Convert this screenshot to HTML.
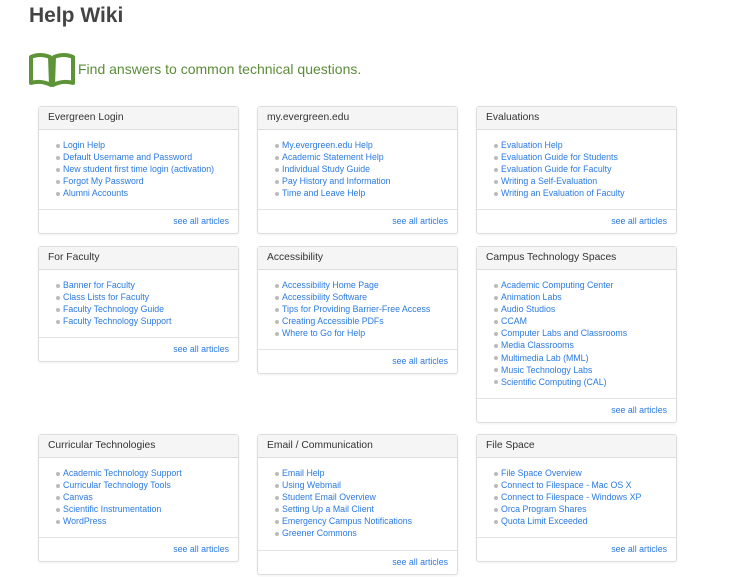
<!DOCTYPE html>
<html><head><meta charset="utf-8"><style>
*{margin:0;padding:0;box-sizing:border-box}
body{width:750px;height:577px;background:#fff;font-family:"Liberation Sans",sans-serif;position:relative;overflow:hidden}
h1{position:absolute;left:29px;top:4px;font-size:21px;font-weight:bold;color:#444}
.tag{position:absolute;left:78px;top:61px;font-size:14px;color:#5b8c38}
.p{position:absolute;width:201px;border:1px solid #ddd;border-radius:3px;box-shadow:0 1px 2px rgba(0,0,0,.06);background:#fff}
.h{height:23px;background:#f5f5f5;border-bottom:1px solid #ddd;font-size:10.3px;color:#333;padding:5px 9px 0;line-height:12px}
ul{list-style:none;padding:9px 0 10px 24px}
li{font-size:8.8px;line-height:12.1px;color:#2a7ae2;position:relative;white-space:nowrap}
li:before{content:"";position:absolute;left:-7px;top:4.5px;width:4px;height:4px;border-radius:50%;background:#bbb}
.f{height:24px;border-top:1px solid #e3e3e3;text-align:right;font-size:8.8px;color:#2a7ae2;padding:6px 9px 0 0}
</style></head><body>
<h1>Help Wiki</h1>
<svg style="position:absolute;left:28px;top:52px" width="48" height="36" viewBox="0 0 48 36"><path d="M3 5 Q12 1 22 5 L23 33 Q13 28 3 31 Z M45 5 Q36 1 26 5 L25 33 Q35 28 45 31 Z" fill="none" stroke="#5e9438" stroke-width="4" stroke-linejoin="round"/></svg>
<div class="tag">Find answers to common technical questions.</div>

<div class="p" style="left:38px;top:106px"><div class="h">Evergreen Login</div><ul><li>Login Help</li><li>Default Username and Password</li><li>New student first time login (activation)</li><li>Forgot My Password</li><li>Alumni Accounts</li></ul><div class="f">see all articles</div></div>
<div class="p" style="left:257px;top:106px"><div class="h">my.evergreen.edu</div><ul><li>My.evergreen.edu Help</li><li>Academic Statement Help</li><li>Individual Study Guide</li><li>Pay History and Information</li><li>Time and Leave Help</li></ul><div class="f">see all articles</div></div>
<div class="p" style="left:476px;top:106px"><div class="h">Evaluations</div><ul><li>Evaluation Help</li><li>Evaluation Guide for Students</li><li>Evaluation Guide for Faculty</li><li>Writing a Self-Evaluation</li><li>Writing an Evaluation of Faculty</li></ul><div class="f">see all articles</div></div>

<div class="p" style="left:38px;top:246px"><div class="h">For Faculty</div><ul><li>Banner for Faculty</li><li>Class Lists for Faculty</li><li>Faculty Technology Guide</li><li>Faculty Technology Support</li></ul><div class="f">see all articles</div></div>
<div class="p" style="left:257px;top:246px"><div class="h">Accessibility</div><ul><li>Accessibility Home Page</li><li>Accessibility Software</li><li>Tips for Providing Barrier-Free Access</li><li>Creating Accessible PDFs</li><li>Where to Go for Help</li></ul><div class="f">see all articles</div></div>
<div class="p" style="left:476px;top:246px"><div class="h">Campus Technology Spaces</div><ul><li>Academic Computing Center</li><li>Animation Labs</li><li>Audio Studios</li><li>CCAM</li><li>Computer Labs and Classrooms</li><li>Media Classrooms</li><li>Multimedia Lab (MML)</li><li>Music Technology Labs</li><li>Scientific Computing (CAL)</li></ul><div class="f">see all articles</div></div>

<div class="p" style="left:38px;top:434px"><div class="h">Curricular Technologies</div><ul><li>Academic Technology Support</li><li>Curricular Technology Tools</li><li>Canvas</li><li>Scientific Instrumentation</li><li>WordPress</li></ul><div class="f">see all articles</div></div>
<div class="p" style="left:257px;top:434px"><div class="h">Email / Communication</div><ul><li>Email Help</li><li>Using Webmail</li><li>Student Email Overview</li><li>Setting Up a Mail Client</li><li>Emergency Campus Notifications</li><li>Greener Commons</li></ul><div class="f">see all articles</div></div>
<div class="p" style="left:476px;top:434px"><div class="h">File Space</div><ul><li>File Space Overview</li><li>Connect to Filespace - Mac OS X</li><li>Connect to Filespace - Windows XP</li><li>Orca Program Shares</li><li>Quota Limit Exceeded</li></ul><div class="f">see all articles</div></div>
</body></html>
